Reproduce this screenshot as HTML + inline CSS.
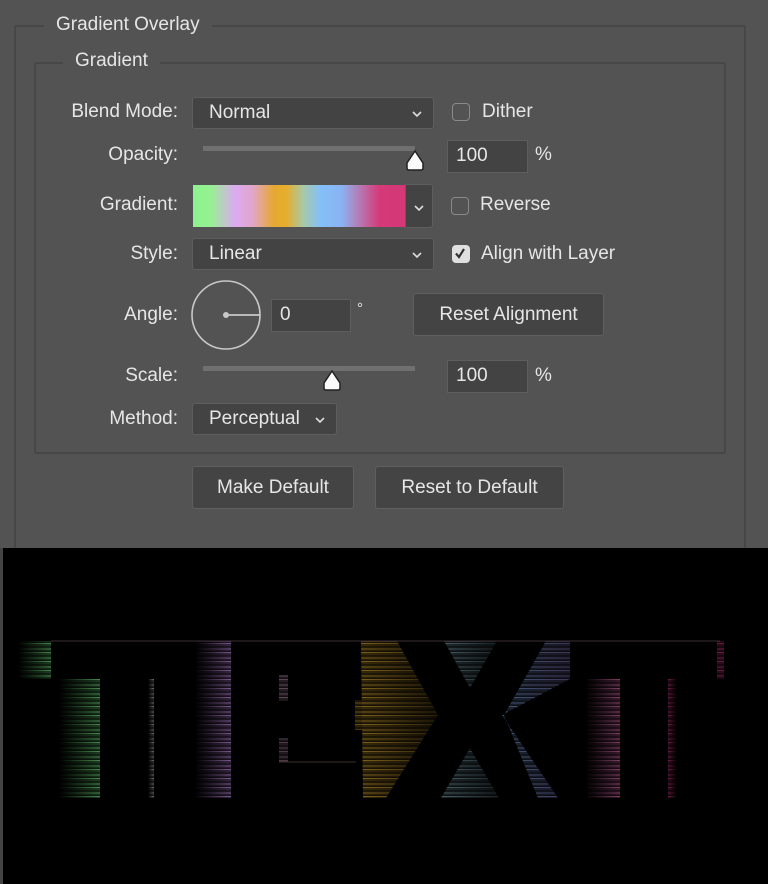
<!DOCTYPE html>
<html><head><style>
*{margin:0;padding:0;box-sizing:border-box}
body{width:768px;height:884px;background:#535353;position:relative;overflow:hidden;font-family:"Liberation Sans",sans-serif;color:#e6e6e6;font-size:19px}
.a{position:absolute}
.frame{position:absolute;border:2px solid #474747;border-radius:2px}
.lg{position:absolute;background:#535353;padding:0 12px;line-height:22px}
.lab{position:absolute;right:590px;text-align:right;line-height:22px;white-space:nowrap}
.dd{position:absolute;background:#434343;border:1px solid #5e5e5e;border-radius:3px;padding-left:16px;line-height:29px}
.ch{position:absolute;right:10px;top:0}
.inp{position:absolute;background:#434343;border:1px solid #5e5e5e;padding-left:8px;line-height:30px}
.cb{position:absolute;width:18px;height:18px;border:1.5px solid #8a8a8a;border-radius:4px}
.btn{position:absolute;background:#444;border:1px solid #5f5f5f;border-radius:3px;text-align:center}
.track{position:absolute;height:5px;background:#707070}
</style></head><body>
<div class="frame" style="left:14px;top:25px;width:732px;height:560px"></div>
<div class="lg" style="left:44px;top:14px">Gradient Overlay</div>
<div class="frame" style="left:34px;top:62px;width:692px;height:392px"></div>
<div class="lg" style="left:63px;top:50px">Gradient</div>

<div class="lab" style="top:101px">Blend Mode:</div>
<div class="dd" style="left:192px;top:97px;width:242px;height:32px">Normal<svg class="ch" width="12" height="29" viewBox="0 0 12 29"><path d="M2 14l4 4 4-4" stroke="#ddd" stroke-width="1.6" fill="none"/></svg></div>
<div class="cb" style="left:452px;top:103px"></div><div class="a" style="left:482px;top:101px">Dither</div>

<div class="lab" style="top:144px">Opacity:</div>
<div class="track" style="left:203px;top:146px;width:212px"></div>
<svg class="a" style="left:403px;top:149px" width="24" height="24" viewBox="0 0 24 24"><path d="M12 2L4 14v5q0 2 2 2h12q2 0 2-2v-5z" fill="#fafafa" stroke="#222" stroke-width="1.5"/></svg>
<div class="inp" style="left:447px;top:140px;width:81px;height:33px">100</div><div class="a" style="left:535px;top:144px">%</div>

<div class="lab" style="top:194px">Gradient:</div>
<div class="a" style="left:193px;top:185px;width:212px;height:42px;background:linear-gradient(90deg,#8cf38f 0%,#95f290 8%,#dcaaf2 20%,#e2a6c9 28%,#e6a832 38%,#e5ae2c 44%,#a8c9a7 52%,#84c0f8 60%,#8ab3f3 70%,#b37eb8 78%,#d63978 88%,#d33877 100%)"></div>
<div class="a" style="left:405px;top:184px;width:28px;height:44px;background:#434343;border:1px solid #5e5e5e;border-radius:0 3px 3px 0"><svg width="26" height="42" viewBox="0 0 26 42"><path d="M9 21l4 4 4-4" stroke="#ddd" stroke-width="1.6" fill="none"/></svg></div>
<div class="cb" style="left:451px;top:197px"></div><div class="a" style="left:480px;top:194px">Reverse</div>

<div class="lab" style="top:243px">Style:</div>
<div class="dd" style="left:192px;top:238px;width:242px;height:32px">Linear<svg class="ch" width="12" height="29" viewBox="0 0 12 29"><path d="M2 14l4 4 4-4" stroke="#ddd" stroke-width="1.6" fill="none"/></svg></div>
<div class="cb" style="left:452px;top:245px;background:#e0e0e0;border-color:#e0e0e0"><svg width="15" height="15" viewBox="0 0 15 15" style="display:block"><path d="M3 7.5l3 3.5 5-8" stroke="#333" stroke-width="2.2" fill="none"/></svg></div>
<div class="a" style="left:481px;top:243px">Align with Layer</div>

<div class="lab" style="top:304px">Angle:</div>
<svg class="a" style="left:190px;top:279px" width="74" height="74" viewBox="0 0 74 74"><circle cx="36" cy="36" r="34" fill="none" stroke="#c8c8c8" stroke-width="1.6"/><circle cx="36" cy="36" r="3" fill="#c8c8c8"/><line x1="36" y1="36" x2="70" y2="36" stroke="#c8c8c8" stroke-width="1.8"/></svg>
<div class="inp" style="left:271px;top:299px;width:80px;height:33px">0</div><div class="a" style="left:357px;top:300px;font-size:15px">°</div>
<div class="btn" style="left:413px;top:293px;width:191px;height:43px;line-height:41px">Reset Alignment</div>

<div class="lab" style="top:365px">Scale:</div>
<div class="track" style="left:203px;top:366px;width:212px"></div>
<svg class="a" style="left:320px;top:369px" width="24" height="24" viewBox="0 0 24 24"><path d="M12 2L4 14v5q0 2 2 2h12q2 0 2-2v-5z" fill="#fafafa" stroke="#222" stroke-width="1.5"/></svg>
<div class="inp" style="left:447px;top:360px;width:81px;height:33px">100</div><div class="a" style="left:535px;top:365px">%</div>

<div class="lab" style="top:408px">Method:</div>
<div class="dd" style="left:192px;top:403px;width:145px;height:32px">Perceptual<svg class="ch" width="12" height="29" viewBox="0 0 12 29"><path d="M2 14l4 4 4-4" stroke="#ddd" stroke-width="1.6" fill="none"/></svg></div>

<div class="btn" style="left:192px;top:466px;width:162px;height:43px;line-height:41px">Make Default</div>
<div class="btn" style="left:375px;top:466px;width:189px;height:43px;line-height:41px">Reset to Default</div>

<svg class="a" style="left:0;top:548px" width="768" height="336" viewBox="0 548 768 336">
<defs>
<pattern id="st" width="768" height="9" patternUnits="userSpaceOnUse"><rect width="768" height="9" fill="#000"/><rect y="0.5" width="768" height="1" fill="#fff" opacity=".85"/><rect y="2.5" width="768" height="0.8" fill="#fff" opacity=".45"/><rect y="4.3" width="768" height="1" fill="#fff" opacity=".9"/><rect y="6.5" width="768" height="0.8" fill="#fff" opacity=".55"/><rect y="8" width="768" height="0.6" fill="#fff" opacity=".3"/></pattern>
<mask id="m"><rect x="0" y="548" width="768" height="336" fill="url(#st)"/></mask>
<linearGradient id="gG" x1="0" x2="1"><stop offset="0" stop-color="#6fd87a" stop-opacity="0"/><stop offset="1" stop-color="#6fd87a"/></linearGradient>
<linearGradient id="gW" x1="1" x2="0"><stop offset="0" stop-color="#ddd" stop-opacity=".8"/><stop offset="1" stop-color="#ddd" stop-opacity="0"/></linearGradient>
<linearGradient id="gP" x1="0" x2="1"><stop offset="0" stop-color="#c08be0" stop-opacity="0"/><stop offset="1" stop-color="#c08be0"/></linearGradient>
<linearGradient id="gY" x1="0" x2="1"><stop offset="0" stop-color="#d9a631" stop-opacity=".9"/><stop offset="1" stop-color="#d9a631" stop-opacity=".3"/></linearGradient>
<linearGradient id="gB" x1="0" x2="1"><stop offset="0" stop-color="#8ab4c4" stop-opacity=".8"/><stop offset="1" stop-color="#8ab4c4" stop-opacity=".3"/></linearGradient>
<linearGradient id="gL" x1="0" x2="1"><stop offset="0" stop-color="#7aa6df" stop-opacity=".8"/><stop offset="1" stop-color="#9a8ee0" stop-opacity=".6"/></linearGradient>
<linearGradient id="gK" x1="0" x2="1"><stop offset="0" stop-color="#c8629e" stop-opacity="0"/><stop offset="1" stop-color="#c8629e"/></linearGradient>
<linearGradient id="gM" x1="0" x2="1"><stop offset="0" stop-color="#c8327a" stop-opacity=".9"/><stop offset="1" stop-color="#c8327a" stop-opacity="0"/></linearGradient>
</defs>
<rect x="0" y="548" width="768" height="336" fill="#000"/>
<rect x="0" y="548" width="3" height="336" fill="#444"/>
<g mask="url(#m)">
<rect x="18" y="641" width="33" height="38" fill="url(#gG)"/>
<rect x="59" y="679" width="41" height="119" fill="url(#gG)"/>
<rect x="148" y="679" width="6" height="119" fill="url(#gW)"/>
<rect x="195" y="641" width="36" height="157" fill="url(#gP)"/>
<rect x="279" y="675" width="9" height="25" fill="#c898b8" opacity=".7"/>
<rect x="279" y="738" width="9" height="24" fill="#c898b8" opacity=".6"/>
<rect x="355" y="700" width="7" height="30" fill="#d9a631" opacity=".7"/>
<polygon points="361,641 397,641 438,715 386,798 363,798" fill="url(#gY)"/>
<polygon points="444,641 497,641 470,688" fill="url(#gB)"/>
<polygon points="441,798 499,798 470,748" fill="url(#gB)"/>
<polygon points="546,641 570,641 570,679 502,715 558,798 538,798 504,715" fill="url(#gL)"/>
<rect x="585" y="679" width="35" height="119" fill="url(#gK)"/>
<rect x="668" y="679" width="9" height="119" fill="url(#gM)"/>
<rect x="717" y="641" width="7" height="38" fill="#c8327a" opacity=".8"/>
</g>
<path d="M51 641H720" stroke="#3a2e34" stroke-width="1"/>
<path d="M279 700H288M279 762H356" stroke="#3a2e2a" stroke-width="1"/>
</svg>
</body></html>
